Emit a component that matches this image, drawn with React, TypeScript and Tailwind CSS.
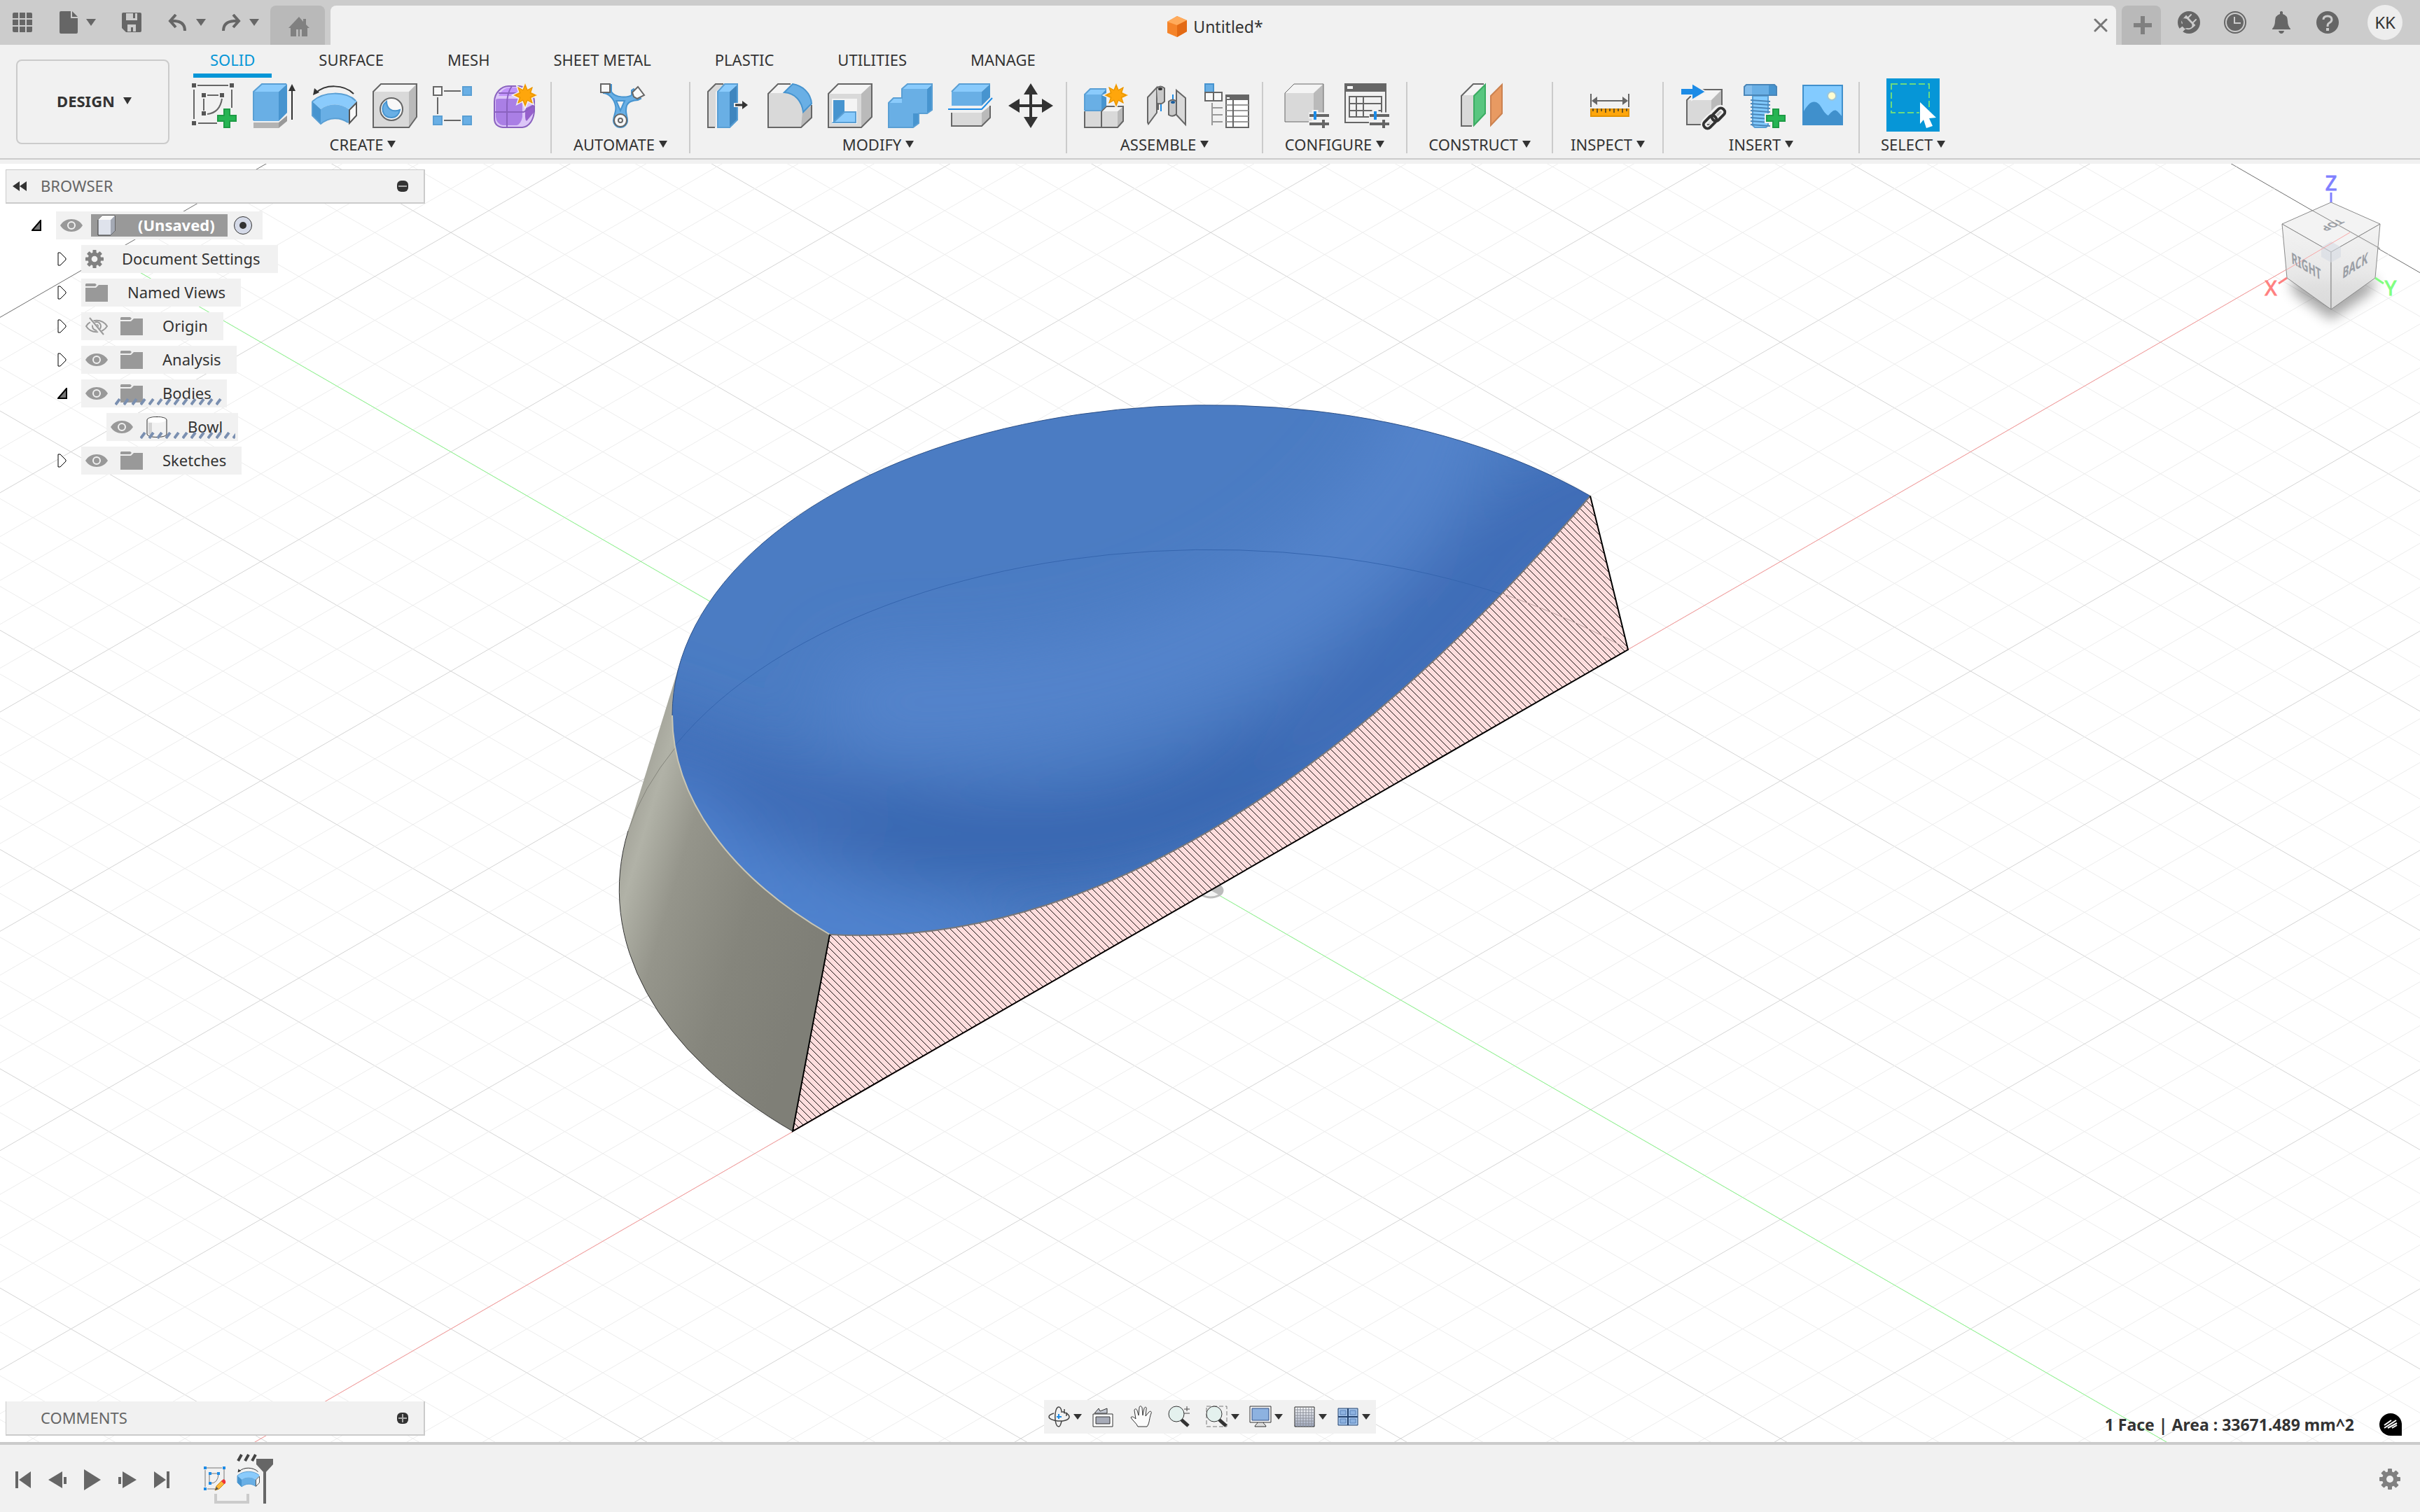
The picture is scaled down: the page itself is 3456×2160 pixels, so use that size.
import React from 'react';

const INK = '#333333';
const GREY = '#666666';

interface IconProps {
  size?: number;
  children: React.ReactNode;
}

const Icon: React.FC<IconProps> = ({ size = 64, children }) => (
  <svg width={size} height={size} viewBox={`0 0 ${size} ${size}`} fill="none" className="block shrink-0 overflow-visible" aria-hidden="true">
    {children}
  </svg>
);

const Caret: React.FC<{ className?: string }> = ({ className = 'w-3 h-[10px]' }) => (
  <svg viewBox="0 0 12 10" preserveAspectRatio="none" className={`shrink-0 ${className}`} aria-hidden="true">
    <path d="M0 0H12L6 10Z" fill="currentColor" />
  </svg>
);

/* Small shapes shared by several ribbon icons */
const Star: React.FC<{ x: number; y: number }> = ({ x, y }) => (
  <g transform={`translate(${x} ${y})`}>
    <path
      d="M0 -17L3.5 -8L11 -12L8.500 -4L17 0L8.500 4L11 12L3.500 8L0 17L-3.500 8L-11 12L-8.500 4L-17 0L-8.500 -4L-11 -12L-3.500 -8Z"
      fill="#ffa60b"
      stroke="#f1f1f1"
      strokeWidth="3"
      paintOrder="stroke"
    />
    <path d="M0 -14L3 -7L10 -11L7 -3L14 0L7 3L10 11L3 7L0 14L-3 7L-10 11L-7 3L-14 0L-7 -3L-10 -11L-3 -7Z" stroke="#e39300" />
  </g>
);

const Plus: React.FC = () => (
  <path d="M46 37H54V46H63V54H54V63H46V54H37V46H46Z" fill="#26b553" stroke="#1e9b45" strokeWidth="2" />
);

const Sliders: React.FC = () => (
  <g>
    <path d="M35 46H66M35 58H66M44 38V54M56 50V66" stroke="#f1f1f1" strokeWidth="9" />
    <path d="M36 46H64M36 58H64M56 52V64" stroke={GREY} strokeWidth="4" />
    <path d="M44 40V52" stroke="#1c8be6" strokeWidth="4" />
  </g>
);

const RevolveShape: React.FC = () => (
  <g>
    <path d="M59 15C45 1 18 1 5 14" stroke={INK} strokeWidth="2" />
    <path d="M1 17L3 7L10 13Z" fill={INK} />
    <path d="M0 26C16 11 48 11 64 26L52 37C40 28 24 28 12 37Z" fill="#8acbfc" />
    <path d="M12 37C24 28 40 28 52 37V57C40 48 24 48 12 58Z" fill="#69afe5" />
    <path d="M0 26L12 37V58L0 46Z" fill="#4794cf" />
    <path d="M0 26C16 11 48 11 62 25M0 26V46L12 58C24 48 40 48 51 56" stroke="#5a9fd4" strokeWidth="2" />
    <path d="M53 38L63 28V46L53 57Z" fill="#f8f8f8" stroke="#555" strokeWidth="2" />
  </g>
);

const SketchIcon = () => (
  <Icon>
    <path d="M8 3H52M3 9V51M57 9V35M9 57H36M22 17H38M17 22V39M43 22Q40 42 22 44" stroke={GREY} strokeWidth="2" />
    <path d="M0 0H6V6H0ZM54 0H60V6H54ZM0 54H6V60H0ZM14 14H20V20H14ZM40 14H46V20H40ZM14 40H20V46H14Z" fill="#555" />
    <Plus />
  </Icon>
);

const ExtrudeIcon = () => (
  <Icon>
    <path d="M2 56H38V64H2Z" fill="#b3b3b3" />
    <path d="M38 56L50 46V54L38 64Z" fill="#999" />
    <path d="M2 12L14 1H50L38 12Z" fill="#8acbfc" />
    <path d="M50 1V42L38 54V12Z" fill="#4794cf" />
    <path d="M2 12H38V54H2Z" fill="#69afe5" />
    <path d="M2 53V12L14 1H49" stroke="#5a9fd4" strokeWidth="2" />
    <path d="M57 8V52" stroke={INK} strokeWidth="2" />
    <path d="M57 1L62 11H52Z" fill={INK} />
  </Icon>
);

const RevolveIcon = () => (
  <Icon>
    <RevolveShape />
  </Icon>
);

const HoleIcon = () => (
  <Icon>
    <path d="M1 12L12 1H63L52 12Z" fill="#f4f4f4" />
    <path d="M63 1V48L52 63V12Z" fill="#bababa" />
    <path d="M1 12H52V63H1Z" fill="#d9d9d9" />
    <path d="M1 63V12L12 1H63V48L52 63Z" stroke={GREY} strokeWidth="2" />
    <circle cx="27" cy="37" r="16" fill="#f8f8f8" stroke={GREY} strokeWidth="2" />
    <path d="M20 26C10 34 14 49 27 49C34 49 38 44 39 38C28 42 20 36 20 26Z" fill="#69afe5" stroke="#4794cf" strokeWidth="2" />
  </Icon>
);

const PatternIcon = () => (
  <Icon>
    <path d="M16 11H40M7 20V44M16 53H40" stroke={GREY} strokeWidth="2" />
    <path d="M1 5H13V17H1Z" fill="#f8f8f8" stroke={GREY} strokeWidth="2" />
    <path d="M43 5H55V17H43ZM1 47H13V59H1ZM43 47H55V59H43Z" fill="#69afe5" stroke="#5a9fd4" strokeWidth="2" />
  </Icon>
);

const FormIcon = () => (
  <Icon>
    <path d="M2 26C2 14 12 4 22 4H38C50 6 59 16 59 26V40C58 52 52 62 42 63H14C5 62 2 56 2 50Z" fill="#dcc6f8" stroke="#8a62bf" strokeWidth="2" />
    <path d="M8 18C12 10 18 6 24 6H40L36 18Z" fill="#c294fb" />
    <path d="M4 24Q4 22 8 22H36Q42 24 42 32V48Q40 58 34 60H14Q5 58 4 48Z" fill="#aa7fe5" />
    <path d="M46 36L58 30V42L48 54Q46 52 46 48Z" fill="#9660cc" />
    <path d="M2 41H44L58 32M20 63V30Q20 14 27 4M8 14H36" stroke="#8a62bf" strokeWidth="2" />
    <Star x={46} y={17} />
  </Icon>
);

const AutomateIcon = () => (
  <Icon>
    <path d="M4 14C12 14 20 22 22 32C24 40 19 46 19 53A10 10 0 0 0 39 53C39 46 35 42 38 32C40 26 48 24 54 24L58 22L48 8L45 10V17C40 20 22 22 16 12V2H12V14Z" fill="#69afe5" stroke="#4794cf" strokeWidth="2" />
    <path d="M23 25H35L29 39Z" fill="#f1f1f1" stroke="#4794cf" strokeWidth="2" />
    <path d="M1 1H14V13H1Z" fill="#f8f8f8" stroke={GREY} strokeWidth="2" />
    <path d="M46 13L54 5L63 17L53 22L48 19Z" fill="#f8f8f8" stroke={GREY} strokeWidth="2" />
    <circle cx="29" cy="53" r="9" fill="#f8f8f8" stroke={GREY} strokeWidth="2" />
    <circle cx="29" cy="53" r="3" stroke={GREY} strokeWidth="2" />
  </Icon>
);

const PressPullIcon = () => (
  <Icon>
    <path d="M1 12L12 1H24L12 12V63H1Z" fill="#d9d9d9" />
    <path d="M11 63H1V12L12 1H23" stroke={GREY} strokeWidth="2" />
    <path d="M14 12L25 1H44L32 12Z" fill="#8acbfc" />
    <path d="M44 1V52L32 64V12Z" fill="#3f86bf" />
    <path d="M14 12H32V64H14Z" fill="#69afe5" />
    <path d="M15 63V12L25 1H43V52L32 63Z" stroke="#5a9fd4" strokeWidth="2" />
    <path d="M38 31H56" stroke="#f1f1f1" strokeWidth="6" />
    <path d="M40 31H52" stroke={INK} strokeWidth="3" />
    <path d="M50 25L58 31L50 37Z" fill={INK} />
  </Icon>
);

const FilletIcon = () => (
  <Icon>
    <path d="M1 15L15 1H33L24 13C38 14 48 26 50 42L63 30V49L48 63H1Z" fill="#d9d9d9" />
    <path d="M2 14L15 2H32L24 14Z" fill="#f4f4f4" />
    <path d="M50 42L63 32V49L48 62Z" fill="#bababa" />
    <path d="M33 1H15L1 15V63H48L63 49V31" stroke={GREY} strokeWidth="2" />
    <path d="M36 1C50 3 62 14 63 29L51 41C49 26 40 14 24 13Z" fill="#69afe5" stroke="#4794cf" strokeWidth="2" />
  </Icon>
);

const ShellIcon = () => (
  <Icon>
    <path d="M1 15L15 1H63L48 15Z" fill="#f4f4f4" />
    <path d="M63 1V48L48 63V15Z" fill="#bababa" />
    <path d="M1 15H48V63H1Z" fill="#d9d9d9" />
    <path d="M1 63V15L15 1H63V48L48 63Z" stroke={GREY} strokeWidth="2" />
    <path d="M6 22H42V58H6Z" fill="#f4f4f4" />
    <path d="M8 24H24V41L8 56Z" fill="#4794cf" />
    <path d="M8 56L24 41H40V56Z" fill="#8acbfc" stroke="#5a9fd4" strokeWidth="2" />
  </Icon>
);

const CombineIcon = () => (
  <Icon>
    <path d="M56 8L64 1V38L56 43H44V57L36 63V43Z" fill="#4794cf" />
    <path d="M20 8L28 1H64L56 8ZM1 28L8 21H20V28Z" fill="#8acbfc" />
    <path d="M1 28H20V8H56V43H36V63H1Z" fill="#69afe5" />
    <path d="M1 63V28L8 21H20V8L28 1H63V38L56 43H44V57L36 63Z" stroke="#5a9fd4" strokeWidth="2" />
  </Icon>
);

const SplitIcon = () => (
  <Icon>
    <path d="M5 12L16 1H60L48 12Z" fill="#8acbfc" />
    <path d="M60 1V20L48 32V12Z" fill="#4794cf" />
    <path d="M5 12H48V32H5Z" fill="#69afe5" />
    <path d="M5 12L16 1H60" stroke="#5a9fd4" strokeWidth="2" />
    <path d="M0 37H48L63 21" stroke="#1c8be6" strokeWidth="2" />
    <path d="M5 42H48V61H5Z" fill="#d9d9d9" />
    <path d="M48 42L60 32V49L48 61Z" fill="#bababa" />
    <path d="M5 42V61H48L60 49V32" stroke={GREY} strokeWidth="2" />
  </Icon>
);

const MoveIcon = () => (
  <Icon>
    <path d="M32 12V52M12 32H52" stroke={INK} strokeWidth="4" />
    <path d="M32 0L42 16H22ZM32 64L42 48H22ZM0 32L16 22V42ZM64 32L48 22V42Z" fill={INK} />
  </Icon>
);

const NewComponentIcon = () => (
  <Icon>
    <path d="M1 40H25V63H1ZM25 40H48V63H25Z" fill="#d9d9d9" />
    <path d="M48 40L56 33V54L48 63Z" fill="#bababa" />
    <path d="M25 40L32 33H56L48 40Z" fill="#f4f4f4" />
    <path d="M1 40V63H48L56 54V33H32L25 40V63" stroke={GREY} strokeWidth="2" />
    <path d="M1 16L9 8H32L25 16Z" fill="#8acbfc" />
    <path d="M25 16L32 8V32L25 39Z" fill="#4794cf" />
    <path d="M1 16H25V39H1Z" fill="#69afe5" />
    <path d="M1 39V16L9 8H32M1 39H25" stroke="#5a9fd4" strokeWidth="2" />
    <Star x={46} y={17} />
  </Icon>
);

const JointIcon = () => (
  <Icon>
    <path d="M5 20L18 6V42L6 58L5 56Z" fill="#d9d9d9" stroke={GREY} strokeWidth="2" />
    <path d="M18 7Q23 2 29 7V26Q26 30 20 29V38" fill="#c8c8c8" stroke={GREY} strokeWidth="2" />
    <ellipse cx="23" cy="8" rx="3" ry="2" fill={INK} />
    <path d="M24 30V40M41 16V28" stroke="#1c8be6" strokeWidth="2" />
    <path d="M35 26Q41 21 46 26V44Q41 49 35 45Z" fill="#c8c8c8" stroke={GREY} strokeWidth="2" />
    <path d="M46 10L59 21V59L46 45Z" fill="#d9d9d9" stroke={GREY} strokeWidth="2" />
    <ellipse cx="41" cy="27" rx="3" ry="2" fill="#1c5f9e" />
  </Icon>
);

const AsBuiltIcon = () => (
  <Icon>
    <path d="M1 1H13V13H1Z" fill="#69afe5" stroke="#4794cf" strokeWidth="2" />
    <path d="M1 13H13V25H1ZM13 13H25V25H13Z" fill="#f8f8f8" stroke={GREY} strokeWidth="2" />
    <path d="M11 28V60M11 35H26M11 45H26M11 55H26" stroke="#999" strokeWidth="2" />
    <path d="M31 17H63V63H31Z" fill="#fff" stroke={GREY} strokeWidth="2" />
    <path d="M31 17H63V24H31Z" fill={GREY} />
    <path d="M31 31H63M31 39H63M31 47H63M31 55H63" stroke="#999" strokeWidth="2" />
    <path d="M41 24V63" stroke={GREY} strokeWidth="2" />
    <path d="M32 20H36V22H32Z" fill="#fff" />
  </Icon>
);

const ConfigureIcon = () => (
  <Icon>
    <path d="M1 14L14 1H56L42 14Z" fill="#f4f4f4" />
    <path d="M56 1V42L42 55V14Z" fill="#bababa" />
    <path d="M1 14H42V55H1Z" fill="#d9d9d9" />
    <path d="M1 55V14L14 1H56V42L42 55Z" stroke={GREY} strokeWidth="1" />
    <Sliders />
  </Icon>
);

const ConfigTableIcon = () => (
  <Icon>
    <path d="M1 1H59V56H1Z" stroke={GREY} strokeWidth="2" />
    <path d="M0 0H60V12H0Z" fill={GREY} />
    <path d="M4 4H12V8H4Z" fill="#f8f8f8" />
    <path d="M7 19H53V48H7ZM7 29H53M7 39H53M17 19V48M27 19V48" stroke={GREY} strokeWidth="2" />
    <Sliders />
  </Icon>
);

const ConstructIcon = () => (
  <Icon>
    <path d="M3 18L20 1H36L20 18V61H3Z" fill="#d9d9d9" />
    <path d="M5 17L20 2H35L20 17Z" fill="#f4f4f4" />
    <path d="M18 61H3V18L20 1H35" stroke={GREY} strokeWidth="2" />
    <path d="M21 18L37 2V43L21 60Z" fill="#59c680" stroke="#3aac62" strokeWidth="2" />
    <path d="M45 18L61 2V43L45 60Z" fill="#e89a62" stroke="#cc8250" strokeWidth="2" />
  </Icon>
);

const InspectIcon = () => (
  <Icon>
    <path d="M5 15V34M59 15V34M10 25H54" stroke={GREY} strokeWidth="2" />
    <path d="M6 25L14 19V31ZM58 25L50 19V31Z" fill={GREY} />
    <path d="M5 37H59V47H5Z" fill="#ffa60b" stroke="#e39300" strokeWidth="2" />
    <path d="M8 36V40M14 36V42M20 36V40M26 36V42M32 36V40M38 36V42M44 36V40M50 36V42M56 36V40" stroke="#6b5320" strokeWidth="2" />
  </Icon>
);

const InsertDeriveIcon = () => (
  <Icon>
    <path d="M9 24L24 9H59L44 24Z" fill="#f4f4f4" />
    <path d="M59 9V44L44 59V24Z" fill="#bababa" />
    <path d="M9 24H44V59H9Z" fill="#d9d9d9" />
    <path d="M9 59V24L24 9H59V44L44 59Z" stroke={GREY} strokeWidth="2" />
    <path d="M0 7H16V0L36 12L16 24V17H0Z" fill="#1c8be6" stroke="#f1f1f1" strokeWidth="2" />
    <g stroke="#f1f1f1" strokeWidth="9">
      <rect x="44" y="38" width="20" height="12" rx="6" transform="rotate(-45 54 44)" />
      <rect x="32" y="50" width="20" height="12" rx="6" transform="rotate(-45 42 56)" />
    </g>
    <g stroke={INK} strokeWidth="4">
      <rect x="43" y="39" width="21" height="11" rx="5" transform="rotate(-45 54 44)" />
      <rect x="32" y="50" width="21" height="11" rx="5" transform="rotate(-45 42 56)" />
    </g>
  </Icon>
);

const FastenerIcon = () => (
  <Icon>
    <path d="M17 18H39V60L36 63H20L17 60Z" fill="#83cbff" stroke="#5a9fd4" strokeWidth="2" />
    <path d="M4 5L8 2H48L52 5V18H4Z" fill="#69afe5" />
    <path d="M5 5L8 2H16V18H5Z" fill="#83bdec" />
    <path d="M40 2H48L51 5V18H40Z" fill="#4794cf" />
    <path d="M5 17V5L8 2H48L51 5V17Z" stroke="#4a86b8" strokeWidth="2" />
    <path d="M14 24L42 26M14 29L42 31M14 34L42 36M14 39L42 41M14 44L42 46M14 49L42 51M14 54L42 56M14 59L42 61" stroke="#4a86b8" strokeWidth="2" />
    <path d="M43 34H57V43H66V57H57V66H43V57H34V43H43Z" fill="#f1f1f1" />
    <Plus />
  </Icon>
);

const DecalIcon = () => (
  <Icon>
    <path d="M3 3H59V59H3Z" fill="#83cbff" stroke="#4090cc" strokeWidth="2" />
    <path d="M3 42C10 28 18 22 26 30C30 35 34 44 39 46C44 40 48 36 52 40Q56 44 59 48V59H3Z" fill="#4090cc" />
    <circle cx="44" cy="18" r="6" fill="#fffdd0" stroke="#9fc6d8" strokeWidth="2" />
  </Icon>
);

const SelectIcon = () => (
  <Icon size={76}>
    <path d="M7 8H61V49H7Z" stroke="#6ddb80" strokeWidth="2" strokeDasharray="9 4" />
    <path d="M48 34L71 56L61 57L66 68L57 71L53 59L48 65Z" fill="#fff" stroke="#0696d7" strokeWidth="2" paintOrder="stroke" />
  </Icon>
);

interface ToolGroup {
  label: string;
  width: string;
  tools: { name: string; icon: React.FC }[];
}

const groups: ToolGroup[] = [
  {
    label: 'CREATE',
    width: 'w-[538px]',
    tools: [
      { name: 'Create Sketch', icon: SketchIcon },
      { name: 'Extrude', icon: ExtrudeIcon },
      { name: 'Revolve', icon: RevolveIcon },
      { name: 'Hole', icon: HoleIcon },
      { name: 'Rectangular Pattern', icon: PatternIcon },
      { name: 'Create Form', icon: FormIcon },
    ],
  },
  { label: 'AUTOMATE', width: 'w-[198px]', tools: [{ name: 'Automated Modeling', icon: AutomateIcon }] },
  {
    label: 'MODIFY',
    width: 'w-[538px]',
    tools: [
      { name: 'Press Pull', icon: PressPullIcon },
      { name: 'Fillet', icon: FilletIcon },
      { name: 'Shell', icon: ShellIcon },
      { name: 'Combine', icon: CombineIcon },
      { name: 'Split Body', icon: SplitIcon },
      { name: 'Move/Copy', icon: MoveIcon },
    ],
  },
  {
    label: 'ASSEMBLE',
    width: 'w-[280px]',
    tools: [
      { name: 'New Component', icon: NewComponentIcon },
      { name: 'Joint', icon: JointIcon },
      { name: 'As-Built Joint', icon: AsBuiltIcon },
    ],
  },
  {
    label: 'CONFIGURE',
    width: 'w-[206px]',
    tools: [
      { name: 'Configure', icon: ConfigureIcon },
      { name: 'Configuration Table', icon: ConfigTableIcon },
    ],
  },
  { label: 'CONSTRUCT', width: 'w-[208px]', tools: [{ name: 'Offset Plane', icon: ConstructIcon }] },
  { label: 'INSPECT', width: 'w-[158px]', tools: [{ name: 'Measure', icon: InspectIcon }] },
  {
    label: 'INSERT',
    width: 'w-[280px]',
    tools: [
      { name: 'Insert Derive', icon: InsertDeriveIcon },
      { name: 'Insert Fastener', icon: FastenerIcon },
      { name: 'Decal', icon: DecalIcon },
    ],
  },
];

const workspaceTabs = ['SOLID', 'SURFACE', 'MESH', 'SHEET METAL', 'PLASTIC', 'UTILITIES', 'MANAGE'];

const TitleBar: React.FC = () => (
  <header className="flex h-16 bg-[#cccccc] pt-2 text-[#666666]">
    <div className="flex w-[386px] shrink-0 items-center pb-2 pl-[18px]">
      <button aria-label="Data panel" className="w-7">
        <svg viewBox="0 0 28 28" className="h-7 w-7" fill="currentColor">
          <path d="M2 0H8V8H0V2Q0 0 2 0ZM10 0H18V8H10ZM20 0H26Q28 0 28 2V8H20ZM0 10H8V18H0ZM10 10H18V18H10ZM20 10H28V18H20ZM0 20H8V28H2Q0 28 0 26ZM10 20H18V28H10ZM20 20H28V26Q28 28 26 28H20Z" />
        </svg>
      </button>
      <button aria-label="File" className="ml-[39px] flex items-center">
        <svg viewBox="0 0 26 32" className="h-8 w-[26px]" fill="currentColor">
          <path d="M2 0H16V10H26V30Q26 32 24 32H2Q0 32 0 30V2Q0 0 2 0ZM18 0L26 8H18Z" />
        </svg>
        <Caret className="ml-3 h-[10px] w-[14px]" />
      </button>
      <button aria-label="Save" className="ml-[37px]">
        <svg viewBox="0 0 28 28" className="h-7 w-7" fill="currentColor">
          <path fillRule="evenodd" d="M2 0H26Q28 0 28 2V26Q28 28 26 28H6L0 22V2Q0 0 2 0ZM6 1V11H22V1H19V8H16V1ZM8 17V27H13V21H16V27H20V17Z" />
        </svg>
      </button>
      <button aria-label="Undo" className="ml-[38px] flex items-center">
        <svg viewBox="0 0 28 24" className="h-6 w-7" fill="none" stroke="currentColor" strokeWidth="4">
          <path d="M11 1L3 10L11 19M3 10H10Q24 11 24 24" />
        </svg>
        <Caret className="ml-3 h-[10px] w-[14px]" />
      </button>
      <button aria-label="Redo" className="ml-[22px] flex items-center">
        <svg viewBox="0 0 28 24" className="h-6 w-7" fill="none" stroke="currentColor" strokeWidth="4">
          <path d="M17 1L25 10L17 19M25 10H18Q3 11 3 24" />
        </svg>
        <Caret className="ml-3 h-[10px] w-[14px]" />
      </button>
    </div>
    <a href="#home" aria-label="Home" className="flex w-[78px] shrink-0 items-center justify-center rounded-t-lg bg-[#b9b9b9] pt-1 pl-1 text-[#808080]">
      <svg viewBox="0 0 30 28" className="h-7 w-[30px]" fill="currentColor">
        <path fillRule="evenodd" d="M15 0L21 7V3H25V11L30 16H27V28H3V16H0ZM11 18V28H14V18ZM16 18V28H19V18Z" />
      </svg>
    </a>
    <div className="ml-2 flex min-w-0 flex-1 items-center rounded-t-lg bg-[#f1f1f1] pr-3">
      <div className="flex flex-1 items-center justify-center gap-2 pt-[3px] pl-2 text-[#333333]">
        <svg viewBox="0 0 30 32" className="h-8 w-[30px]">
          <path d="M1 9L15 1L29 7V23L15 31L1 25Z" fill="#f5842a" />
          <path d="M1 9L15 1L29 7L15 14Z" fill="#ffab5c" />
          <path d="M15 14L29 7V23L15 31Z" fill="#e36a14" />
        </svg>
        <span className="text-[23px] leading-7">Untitled*</span>
      </div>
      <button aria-label="Close tab" className="text-[#777777]">
        <svg viewBox="0 0 20 20" className="h-5 w-5" stroke="currentColor" strokeWidth="3" strokeLinecap="round">
          <path d="M2 2L18 18M18 2L2 18" />
        </svg>
      </button>
    </div>
    <button aria-label="New tab" className="ml-2 flex w-14 shrink-0 items-center justify-center rounded-t-lg bg-[#b9b9b9] pl-[3px] text-[#808080]">
      <svg viewBox="0 0 26 26" className="h-[26px] w-[26px]" stroke="currentColor" strokeWidth="6">
        <path d="M13 0V26M0 13H26" />
      </svg>
    </button>
    <div className="flex w-[370px] shrink-0 items-center justify-between pr-[25px] pb-2 pl-6">
      <div className="flex gap-[34px]">
        <button aria-label="Extensions">
          <svg viewBox="0 0 32 32" className="h-8 w-8">
            <circle cx="16" cy="16" r="16" fill="#666" />
            <path d="M0 28L9 21C3 15 8 12 12 7L24 20C19 25 15 27 11 24L4 31ZM15 9L19 5M22 16L26 12" fill="#ccc" stroke="#ccc" strokeWidth="2" strokeLinecap="round" />
            <path d="M7 17C4 11 8 9 13 11L20 18C22 23 18 25 13 24L10 25L5 20Z" fill="#666" />
          </svg>
        </button>
        <button aria-label="Job status">
          <svg viewBox="0 0 32 32" className="h-8 w-8">
            <circle cx="16" cy="16" r="15" fill="none" stroke="#666" strokeWidth="2" />
            <circle cx="16" cy="16" r="12" fill="#666" />
            <path d="M15 8V17H24" fill="none" stroke="#ccc" strokeWidth="2" />
          </svg>
        </button>
        <button aria-label="Notifications">
          <svg viewBox="0 0 32 32" className="h-8 w-8" fill="#666">
            <path d="M14 1Q16 -1 18 1V4Q25 6 25 14Q25 21 29 25V26H3V25Q7 21 7 14Q7 6 14 4ZM12 28H20Q19 32 16 32Q13 32 12 28Z" />
          </svg>
        </button>
        <button aria-label="Help">
          <svg viewBox="0 0 32 32" className="h-8 w-8">
            <circle cx="16" cy="16" r="16" fill="#666" />
            <path d="M10 12Q10 7 16 7Q22 7 22 12Q22 15 18 17Q16 18 16 22" fill="none" stroke="#ccc" strokeWidth="3" />
            <path d="M14 24H18V28H14Z" fill="#ccc" />
          </svg>
        </button>
      </div>
      <button className="flex h-[50px] w-[50px] items-center justify-center rounded-full bg-[#ededed] text-[24px] leading-7 text-[#333333]">KK</button>
    </div>
  </header>
);

const Ribbon: React.FC = () => (
  <div className="flex h-[164px] shrink-0 border-b-2 border-[#cbcbcb] bg-[#f1f1f1] text-[22px] leading-7 text-[#333333]">
    <button className="mt-[21px] ml-[23px] flex h-[121px] w-[219px] shrink-0 items-center justify-center gap-3 rounded-lg border-2 border-[#cbcbcb] pb-1 pl-1 font-bold">
      DESIGN
      <Caret />
    </button>
    <div className="ml-2 flex min-w-0 flex-col">
      <nav className="ml-[26px] flex h-[47px] gap-[43px]">
        {workspaceTabs.map((tab) => (
          <a
            key={tab}
            href={`#${tab.toLowerCase().replace(' ', '-')}`}
            className={
              tab === 'SOLID'
                ? 'h-[47px] border-b-[6px] border-[#0696d7] px-6 pt-[7px] text-[#0696d7]'
                : 'h-[47px] border-b-[6px] border-transparent px-6 pt-[7px]'
            }
          >
            {tab}
          </a>
        ))}
      </nav>
      <div className="flex h-[114px] pt-[6px]">
        {groups.map((group) => (
          <div key={group.label} className={`flex h-[102px] shrink-0 flex-col items-center border-r-2 border-[#cbcbcb] ${group.width}`}>
            <div className="flex gap-[22px] pt-[2px] pl-[6px]">
              {group.tools.map(({ name, icon: ToolIcon }) => (
                <button key={name} aria-label={name}>
                  <ToolIcon />
                </button>
              ))}
            </div>
            <button className="mt-[9px] flex items-center gap-[6px]">
              {group.label}
              <Caret />
            </button>
          </div>
        ))}
        <div className="-mt-[5px] flex flex-col items-center pl-[30px]">
          <button aria-label="Select" className="bg-[#0696d7]">
            <SelectIcon />
          </button>
          <button className="mt-1 flex items-center gap-[6px]">
            SELECT
            <Caret />
          </button>
        </div>
      </div>
    </div>
  </div>
);

/* Isometric construction grid: every fifth line is a major one */
const CX = 1729;
const CY = 1272;
const SLOPE = 0.57735;
const STEP = 62.65;

const range = (from: number, to: number) => Array.from({ length: to - from + 1 }, (_, i) => from + i);

const yA = (x: number, k: number) => CY + (x - CX) * SLOPE + k * STEP;
const yB = (x: number, m: number) => CY - (x - CX) * SLOPE + m * STEP;

// x where family A line k meets family B line m
const crossX = (k: number, m: number) => CX + ((m - k) * STEP) / (2 * SLOPE);

const gridColor = (n: number, edge: number) => (n === edge ? '#6e6e6e' : n % 5 === 0 ? '#d4d4d4' : '#ededed');

const EDGE_A = -30;
const EDGE_B = -29;

const Grid: React.FC = () => (
  <g strokeWidth="1">
    {range(EDGE_A, 32).map((k) => {
      const x1 = crossX(k, EDGE_B);
      return <line key={`a${k}`} x1={x1} y1={yA(x1, k)} x2={3600} y2={yA(3600, k)} stroke={gridColor(k, EDGE_A)} />;
    })}
    {range(EDGE_B, 32).map((m) => {
      const x2 = crossX(EDGE_A, m);
      return <line key={`b${m}`} x1={-100} y1={yB(-100, m)} x2={x2} y2={yB(x2, m)} stroke={gridColor(m, EDGE_B)} />;
    })}
    <line x1={crossX(0, EDGE_B)} y1={yA(crossX(0, EDGE_B), 0)} x2={3600} y2={yA(3600, 0)} stroke="#8dfb8d" />
    <line x1={-100} y1={yB(-100, 0)} x2={crossX(EDGE_A, 0)} y2={yB(crossX(EDGE_A, 0), 0)} stroke="#fb9a9a" />
  </g>
);

const BOWL = 'M1185 1335A768 443.500 0 0 1 960 1022A768 443.500 0 0 1 1728 578.500A768 443.500 0 0 1 2271 708.500C1912 1130 1540 1355 1185 1335Z';
const SECTION = 'M1185 1335C1540 1355 1912 1130 2271 708.500L2325 928L1132 1616Z';

const Scene: React.FC = () => (
  <svg viewBox="0 234 3456 1826" preserveAspectRatio="xMidYMid slice" className="absolute inset-0 h-full w-full" role="img" aria-label="Section view of a bowl">
    <defs>
      <linearGradient id="side" gradientUnits="userSpaceOnUse" x1="884" y1="1200" x2="1185" y2="1290">
        <stop offset="0" stopColor="#a3a399" />
        <stop offset="0.1" stopColor="#b1b2a7" />
        <stop offset="0.3" stopColor="#95958b" />
        <stop offset="0.65" stopColor="#85857c" />
        <stop offset="1" stopColor="#7f7f77" />
      </linearGradient>
      <pattern id="hatch" width="10" height="10" patternUnits="userSpaceOnUse">
        <path d="M0 0L10 10M-1 9L1 11M9 -1L11 1" stroke="#1a1010" strokeWidth="1" />
      </pattern>
      <filter id="soft" filterUnits="userSpaceOnUse" x="600" y="300" width="2000" height="1400">
        <feGaussianBlur stdDeviation="50" />
      </filter>
      <clipPath id="bowl">
        <path d={BOWL} />
      </clipPath>
    </defs>
    <Grid />
    <ellipse cx="1729" cy="1272" rx="17" ry="10" fill="#f4f4f4" stroke="#bdbdbd" strokeWidth="3" />
    <path d="M1729 1272L1742 1264Q1750 1272 1742 1279Z" fill="#bdbdbd" />

    {/* Outer wall */}
    <path d="M972 944L897 1187A843 487 0 0 0 1132 1616L1185 1335L1160 1000Z" fill="url(#side)" />
    <path d="M897 1187A843 487 0 0 0 1132 1616" fill="none" stroke="#333" strokeWidth="1" />
    <path d="M897 1187Q917 1126 966 1066" fill="none" stroke="#85857c" strokeWidth="1" />

    {/* Selected inner face */}
    <g clipPath="url(#bowl)">
      <path d={BOWL} fill="#4b7cc3" />
      <g filter="url(#soft)" fill="none" strokeLinecap="round">
        <path d="M1250 1000C1560 1020 1820 900 1950 760S2020 640 2070 560" stroke="#5584cc" strokeWidth="130" />
        <path d="M900 1070C1120 1160 1360 1220 1560 1190S1960 1000 2110 830S2250 740 2310 680" stroke="#3d6bb5" strokeWidth="130" />
        <path d="M1260 1190C1450 1240 1600 1220 1800 1110" stroke="#3464ad" strokeWidth="90" />
        <path d="M950 1150C1050 1280 1160 1330 1380 1365" stroke="#5185d3" strokeWidth="90" />
      </g>
      <path d="M884 1272A844 487 0 0 1 2325 928" fill="none" stroke="#3565ae" strokeWidth="1" />
    </g>
    <path d="M1185 1335A768 443.500 0 0 1 960 1022" fill="none" stroke="#c9c6b4" strokeWidth="2" />
    <path d="M960 1022A768 443.500 0 0 1 2271 708.500" fill="none" stroke="#2b4f87" strokeWidth="1" />

    {/* Cut plane */}
    <path d={SECTION} fill="#fedddd" />
    <path d={SECTION} fill="url(#hatch)" />
    <path d="M2148 849Q2250 885 2325 928" fill="none" stroke="#b9a0a0" strokeWidth="1" />
    <path d="M1185 1335C1540 1355 1912 1130 2271 708.500" fill="none" stroke="#77777a" strokeWidth="2" />
    <path d="M1185 1335L1132 1616L2325 928L2271 708.500" fill="none" stroke="#000" strokeWidth="2" />
  </svg>
);

const ViewCube: React.FC = () => (
  <svg viewBox="0 0 200 230" className="-mt-[3px] h-[230px] w-[200px] shrink-0 overflow-visible" role="img" aria-label="View cube" fontWeight="700">
    <defs>
      <filter id="cubeShadow" x="-30%" y="-30%" width="160%" height="160%">
        <feGaussianBlur stdDeviation="9" />
      </filter>
      <linearGradient id="cubeSide" x1="0" y1="0" x2="0" y2="1">
        <stop offset="0" stopColor="#f2f2f2" />
        <stop offset="1" stopColor="#dedede" />
      </linearGradient>
    </defs>
    <path d="M40 160L99 160L165 160L155 180L99 218L46 180Z" fill="#000" opacity="0.34" filter="url(#cubeShadow)" />
    <g stroke="#8a8a8a" strokeLinejoin="round" fillOpacity="0.93">
      <path d="M99 50L169 81L99 121L29 81Z" fill="#f2f2f2" />
      <path d="M29 81L99 121V203L36 158Z" fill="url(#cubeSide)" />
      <path d="M169 81L99 121V203L162 158Z" fill="url(#cubeSide)" />
    </g>
    <path d="M99 106L113 114V128L99 136L85 128V114Z" fill="#d6dae2" opacity="0.6" />
    <path d="M71 61L169 116" stroke="#8a8a8a" />
    <path d="M36 146L126 93" stroke="#fb9a9a" opacity="0.8" />
    <g fill="#9a9ea5" fontSize="22" textAnchor="middle">
      <text transform="matrix(-0.62 0.31 -0.62 -0.31 96 80)">TOP</text>
      <text transform="matrix(0.62 0.36 0.06 1 64 149)">RIGHT</text>
      <text transform="matrix(0.62 -0.4 -0.06 1 133 148)">BACK</text>
    </g>
    <path d="M99 36V50" stroke="#8080ff" strokeWidth="3" />
    <path d="M24 166L36 158" stroke="#ff8080" strokeWidth="3" />
    <path d="M174 166L162 158" stroke="#80ff80" strokeWidth="3" />
    <g fontSize="29" fontWeight="400" textAnchor="middle" strokeWidth="1">
      <text x="99" y="33" fill="#8080ff" stroke="#8080ff">Z</text>
      <text x="13" y="183" fill="#ff8080" stroke="#ff8080">X</text>
      <text x="184" y="183" fill="#80ff80" stroke="#80ff80">Y</text>
    </g>
  </svg>
);

const EyeIcon = () => (
  <svg viewBox="0 0 32 32" className="h-8 w-8 shrink-0">
    <path d="M0 16C7 4 25 4 32 16C25 28 7 28 0 16Z" fill="#999" />
    <circle cx="16" cy="16" r="5" fill="none" stroke="#f1f1f1" strokeWidth="2" />
  </svg>
);

const EyeOffIcon = () => (
  <svg viewBox="0 0 32 32" className="h-8 w-8 shrink-0" fill="none" stroke="#999" strokeWidth="2">
    <path d="M1 16C8 5 24 5 31 16C24 27 8 27 1 16Z" />
    <circle cx="16" cy="16" r="6" />
    <circle cx="16" cy="16" r="2" />
    <path d="M5 4L25 29" stroke="#f1f1f1" strokeWidth="5" />
    <path d="M6 4L26 28" />
  </svg>
);

const FolderIcon = () => (
  <svg viewBox="0 0 32 32" className="h-8 w-8 shrink-0" fill="#999">
    <path d="M1 3H14L16 5L14 7H0V4ZM0 9H15L19 5H32V29H0Z" />
  </svg>
);

const GearIcon: React.FC<{ className?: string }> = ({ className = '' }) => (
  <svg viewBox="0 0 30 30" className={`shrink-0 ${className}`} fill="#808080">
    {[0, 45, 90, 135].map((angle) => (
      <rect key={angle} x="12" y="0" width="6" height="30" rx="1" transform={`rotate(${angle} 15 15)`} />
    ))}
    <circle cx="15" cy="15" r="11" />
    <circle cx="15" cy="15" r="5" fill="#f1f1f1" />
  </svg>
);

const DocumentIcon = () => (
  <svg viewBox="0 0 32 32" className="h-8 w-8 shrink-0">
    <path d="M4 8L10 2H28V24L22 30H4Z" fill="#dfe3ec" stroke="#333" strokeWidth="1" />
    <path d="M22 8L28 2V24L22 30Z" fill="#a4a9b4" />
    <path d="M4 8L10 2H28L22 8Z" fill="#fafafa" />
  </svg>
);

const BodyIcon = () => (
  <svg viewBox="0 0 32 32" className="h-8 w-8 shrink-0">
    <path d="M2 6C2 0 30 0 30 6V26C30 32 2 32 2 26Z" fill="#f2f2f2" stroke="#333" strokeWidth="1" />
    <ellipse cx="16" cy="6" rx="13" ry="4" fill="#fff" />
    <path d="M4 10H9V28L4 26Z" fill="#d4d4d4" />
  </svg>
);

const Expander: React.FC<{ open?: boolean }> = ({ open }) =>
  open ? (
    <svg viewBox="0 0 14 16" className="h-4 w-[14px] shrink-0">
      <path d="M1 15L13 1V15Z" fill="#777" stroke="#000" strokeWidth="2" />
    </svg>
  ) : (
    <svg viewBox="0 0 14 20" className="h-5 w-[14px] shrink-0">
      <path d="M1 1H4L12 9V11L4 19H1Z" fill="#fff" stroke="#000" />
    </svg>
  );

/* Slanted ticks under an item touched by the selection */
const Ticks: React.FC<{ id: string }> = ({ id }) => (
  <svg className="absolute right-1 bottom-[3px] left-12 h-[10px] w-[calc(100%-52px)]" aria-hidden="true">
    <defs>
      <pattern id={id} width="12" height="10" patternUnits="userSpaceOnUse">
        <path d="M1 9L7 1" stroke="#7a8fb0" strokeWidth="4" />
      </pattern>
    </defs>
    <rect width="100%" height="10" fill={`url(#${id})`} />
  </svg>
);

interface TreeItem {
  label: string;
  indent: string;
  open?: boolean;
  leaf?: boolean;
  eye?: 'on' | 'off';
  icon: React.ReactNode;
  textGap: string;
  marked?: boolean;
}

const treeItems: TreeItem[] = [
  { label: 'Document Settings', indent: 'pl-[74px]', icon: <GearIcon className="h-[26px] w-[26px]" />, textGap: 'ml-[26px] mr-1' },
  { label: 'Named Views', indent: 'pl-[74px]', icon: <FolderIcon />, textGap: 'ml-[28px]' },
  { label: 'Origin', indent: 'pl-[74px]', eye: 'off', icon: <FolderIcon />, textGap: 'ml-[28px]' },
  { label: 'Analysis', indent: 'pl-[74px]', eye: 'on', icon: <FolderIcon />, textGap: 'ml-[28px]' },
  { label: 'Bodies', indent: 'pl-[74px]', open: true, eye: 'on', icon: <FolderIcon />, textGap: 'ml-[28px]', marked: true },
  { label: 'Bowl', indent: 'pl-[144px]', leaf: true, eye: 'on', icon: <BodyIcon />, textGap: 'ml-[28px]', marked: true },
  { label: 'Sketches', indent: 'pl-[74px]', eye: 'on', icon: <FolderIcon />, textGap: 'ml-[28px]' },
];

const Browser: React.FC = () => (
  <aside className="w-[599px] text-[22px] leading-7 text-[#333333]">
    <div className="flex h-[49px] items-center border border-r-2 border-b-2 border-[#cbcbcb] bg-[#f1f1f1] pr-[22px] pl-[9px] text-[#666666]">
      <button aria-label="Collapse browser">
        <svg viewBox="0 0 20 14" className="h-[14px] w-5" fill="#333">
          <path d="M0 7L10 0V14ZM10 7L20 0V14Z" />
        </svg>
      </button>
      <h2 className="ml-5 flex-1 pb-[2px]">BROWSER</h2>
      <button aria-label="Minimize browser">
        <svg viewBox="0 0 16 16" className="h-4 w-4">
          <rect width="16" height="16" rx="6" fill="#333" />
          <path d="M2 8H14" stroke="#aaa" strokeWidth="2" />
        </svg>
      </button>
    </div>
    <ul className="mt-[11px] flex flex-col gap-2">
      <li className="flex items-center pl-[37px]">
        <Expander open />
        <div className="ml-[21px] flex h-10 items-center bg-[#f1f1f1] pr-[15px] pl-[6px]">
          <EyeIcon />
          <div className="ml-3 flex h-8 items-center bg-[#999999] pr-[18px] pl-[6px]">
            <DocumentIcon />
            <span className="ml-[29px] pb-[2px] font-bold text-white">(Unsaved)</span>
          </div>
          <label className="ml-[9px] flex h-[26px] w-[26px] items-center justify-center rounded-full border border-[#333333] bg-[#d5dae8]">
            <input type="radio" name="active" defaultChecked aria-label="Activate component" className="h-[10px] w-[10px] appearance-none rounded-full bg-[#333333]" />
          </label>
        </div>
      </li>
      {treeItems.map((item) => (
        <li key={item.label} className={`flex items-center ${item.indent}`}>
          {!item.leaf && (
            <div className="mr-5 flex w-[14px]">
              <Expander open={item.open} />
            </div>
          )}
          <div className="relative flex h-10 items-center bg-[#f1f1f1] pr-[22px] pl-[6px]">
            {item.eye && (
              <span className="mr-[18px]">{item.eye === 'on' ? <EyeIcon /> : <EyeOffIcon />}</span>
            )}
            {item.icon}
            <span className={`pb-[2px] ${item.textGap}`}>{item.label}</span>
            {item.marked && <Ticks id={`ticks-${item.label}`} />}
          </div>
        </li>
      ))}
    </ul>
  </aside>
);

const navTools = [
  {
    name: 'Orbit',
    menu: true,
    icon: (
      <g fill="none" stroke="#444" strokeWidth="1.500">
        <path d="M19 22C18 27 17 30 15 30C8 30 8 2 15 2Q18 2 19 8" />
        <path d="M8 11Q1 13 1 16C1 21 16 23 23 21.500Q30 20 30 16Q30 13 26 11M26 15V10.500H22M23 5V9H18" />
        <path d="M15 12V19M12 16H19" stroke="#1c8be6" strokeWidth="2" />
      </g>
    ),
  },
  {
    name: 'Look At',
    icon: (
      <g stroke="#333" strokeWidth="1">
        <path d="M4 11L10 4L12 8L22 4V11Z" fill="#c3c7d1" />
        <path d="M2 12H30V30H2Z" fill="#fff" />
        <path d="M6 16H26V26H6Z" fill="#a7abb8" />
      </g>
    ),
  },
  {
    name: 'Pan',
    icon: (
      <path
        d="M11 30C9 25 3 21 1 17C2 15 5 16 8 19L6 7C6 4 9 4 10 7L12 14L13 3C13 0 16 0 17 3L18 14L20 4C21 1 24 2 23 5L22 15L27 9C29 7 31 9 30 11C27 18 28 25 24 30Z"
        fill="#fbfbfb"
        stroke="#333"
        strokeWidth="1"
      />
    ),
  },
  {
    name: 'Zoom',
    icon: (
      <g>
        <path d="M19 20L29 29" stroke="#333" strokeWidth="5" />
        <circle cx="12" cy="12" r="11" fill="#e4f1ee" stroke="#333" strokeWidth="1" />
        <path d="M27 1V8M23 5H31M23 11H31" stroke="#444" strokeWidth="1" />
      </g>
    ),
  },
  {
    name: 'Zoom Window',
    menu: true,
    icon: (
      <g>
        <path d="M1 1H30V30H1Z" fill="none" stroke="#777" strokeWidth="1" strokeDasharray="6 3" />
        <path d="M19 20L29 29" stroke="#333" strokeWidth="5" />
        <circle cx="12" cy="12" r="11" fill="#e4f1ee" stroke="#333" strokeWidth="1" />
      </g>
    ),
  },
  {
    name: 'Display Settings',
    menu: true,
    icon: (
      <g stroke="#333" strokeWidth="1">
        <path d="M8 30C8 27 12 27 12 23H20C20 27 24 27 24 30Z" fill="#dcdcdc" />
        <path d="M1 1H31V24H1Z" fill="#f5f5f5" />
        <path d="M4 4H28V21H4Z" fill="#8db2e0" stroke="#2f4f86" />
      </g>
    ),
  },
  {
    name: 'Grid and Snaps',
    menu: true,
    icon: (
      <g>
        <path d="M2 2H30V30H2Z" fill="url(#snapFill)" stroke="#222" strokeWidth="1" />
        <path d="M6 2V30M10 2V30M14 2V30M18 2V30M22 2V30M26 2V30M2 6H30M2 10H30M2 14H30M2 18H30M2 22H30M2 26H30" stroke="#8b8f99" strokeWidth="1" />
      </g>
    ),
  },
  {
    name: 'Viewports',
    menu: true,
    icon: (
      <g stroke="#23426f" strokeWidth="1">
        <path d="M2 4H30V28H2Z" fill="#a4c4ea" />
        <path d="M16 4V28M2 16H30" strokeWidth="2" />
        <path d="M5 7H13V13H5ZM19 7H27V13H19ZM5 19H13V25H5ZM19 19H27V25H19Z" fill="#8db2e0" stroke="#5c83ba" />
      </g>
    ),
  },
];

const NavBar: React.FC = () => (
  <div className="flex h-12 items-center justify-between bg-[#f1f1f1] pr-2 pl-[6px] text-[#333333]">
    {navTools.map((tool) => (
      <button key={tool.name} aria-label={tool.name} className={tool.menu ? 'flex items-center' : 'mr-2 flex items-center'}>
        <svg viewBox="0 0 32 32" className="h-8 w-8">
          {tool.name === 'Grid and Snaps' && (
            <defs>
              <linearGradient id="snapFill" x1="0" y1="0" x2="0" y2="1">
                <stop offset="0" stopColor="#ffffff" />
                <stop offset="1" stopColor="#a3acc2" />
              </linearGradient>
            </defs>
          )}
          {tool.icon}
        </svg>
        {tool.menu && <Caret className="ml-1 h-2 w-3" />}
      </button>
    ))}
  </div>
);

const Timeline: React.FC = () => (
  <footer className="flex h-[100px] shrink-0 border-t-4 border-[#cbcbcb] bg-[#f1f1f1] pr-7 pl-[22px]">
    <div className="flex h-[100px] items-center gap-[25px] text-[#666666]">
      <button aria-label="Go to start">
        <svg viewBox="0 0 22 30" className="h-[30px] w-[22px]" fill="currentColor"><path d="M0 3H4V27H0ZM22 3V27L5 15Z" /></svg>
      </button>
      <button aria-label="Step back">
        <svg viewBox="0 0 26 30" className="h-[30px] w-[26px]" fill="currentColor"><path d="M0 15L20 3V27ZM22 11H26V21H22Z" /></svg>
      </button>
      <button aria-label="Play">
        <svg viewBox="0 0 24 30" className="h-[30px] w-6" fill="currentColor"><path d="M0 0L24 15L0 30Z" /></svg>
      </button>
      <button aria-label="Step forward">
        <svg viewBox="0 0 26 30" className="h-[30px] w-[26px]" fill="currentColor"><path d="M26 15L6 3V27ZM0 11H4V21H0Z" /></svg>
      </button>
      <button aria-label="Go to end">
        <svg viewBox="0 0 22 30" className="h-[30px] w-[22px]" fill="currentColor"><path d="M18 3H22V27H18ZM0 3V27L17 15Z" /></svg>
      </button>
    </div>
    <svg viewBox="0 0 110 90" className="ml-[48px] h-[90px] w-[110px]" fill="none" role="img" aria-label="Timeline features">
      <g transform="translate(0 30)">
        <path d="M5 3H27M3 6V30M30 5V20M6 33H17M10 11H20M9 13V23M22 12Q21 25 11 25" stroke="#777" />
        <path d="M1 1H5V5H1ZM28 1H32V5H28ZM1 31H5V35H1ZM8 9H12V13H8ZM20 9H24V13H20ZM8 23H12V27H8Z" fill="#1c8be6" />
        <path d="M17 35L19 29L27 21L31 25L23 33Z" fill="#fbb83c" stroke="#c98a1c" />
        <path d="M26 22L29 19Q33 20 32 25L30 26Z" fill="#ee3338" />
        <path d="M17 35L19 30L22 33Z" fill="#555" />
      </g>
      <g transform="translate(49 31) scale(0.5)">
        <RevolveShape />
      </g>
      <path d="M50 23L55 14M60 23L65 14M70 23L75 14" stroke="#444" strokeWidth="4" />
      <path d="M18 70V82H64V70" stroke="#cbcbcb" strokeWidth="4" />
      <path d="M76 20H100V28L88 41L76 28Z" fill="#666" />
      <path d="M88 36V84" stroke="#666" strokeWidth="4" />
    </svg>
    <button aria-label="Preferences" className="mt-[34px] ml-auto h-[30px]">
      <GearIcon className="h-[30px] w-[30px]" />
    </button>
  </footer>
);

const App: React.FC = () => (
  <div className="flex h-screen flex-col overflow-hidden bg-[#f1f1f1] font-['Noto_Sans','Open_Sans',sans-serif]">
    <TitleBar />
    <Ribbon />
    <main className="relative mt-[6px] flex min-h-0 flex-1 flex-col justify-between bg-white">
      <Scene />
      <div className="relative flex items-start justify-between pt-2 pr-[26px] pl-2">
        <Browser />
        <ViewCube />
      </div>
      <div className="relative grid grid-cols-3 items-end px-2 pb-[9px] text-[22px] leading-7">
        <section className="flex h-[49px] w-[599px] items-center border border-t-0 border-r-2 border-b-2 border-[#cbcbcb] bg-[#f1f1f1] pr-[22px] pl-[49px] text-[#666666]">
          <h2 className="flex-1 pb-[2px]">COMMENTS</h2>
          <button aria-label="Expand comments">
            <svg viewBox="0 0 16 16" className="h-4 w-4">
              <rect width="16" height="16" rx="6" fill="#333" />
              <path d="M2 8H14M8 2V14" stroke="#aaa" strokeWidth="2" />
            </svg>
          </button>
        </section>
        <div className="mx-auto mb-[3px] w-[474px]">
          <NavBar />
        </div>
        <div className="flex items-center justify-end gap-9 pr-[18px] text-[23px] font-bold text-[#333333]">
          <p>1 Face | Area : 33671.489 mm^2</p>
          <button aria-label="Assistant">
            <svg viewBox="0 0 32 32" className="h-8 w-8">
              <path d="M16 0A16 16 0 0 1 32 16V32H16A16 16 0 0 1 16 0Z" fill="#000" />
              <path d="M7 17L17 10M7 21L24 10M12 21L25 14M18 21L25 17" stroke="#fff" strokeWidth="2" />
            </svg>
          </button>
        </div>
      </div>
    </main>
    <Timeline />
  </div>
);

export default App;
